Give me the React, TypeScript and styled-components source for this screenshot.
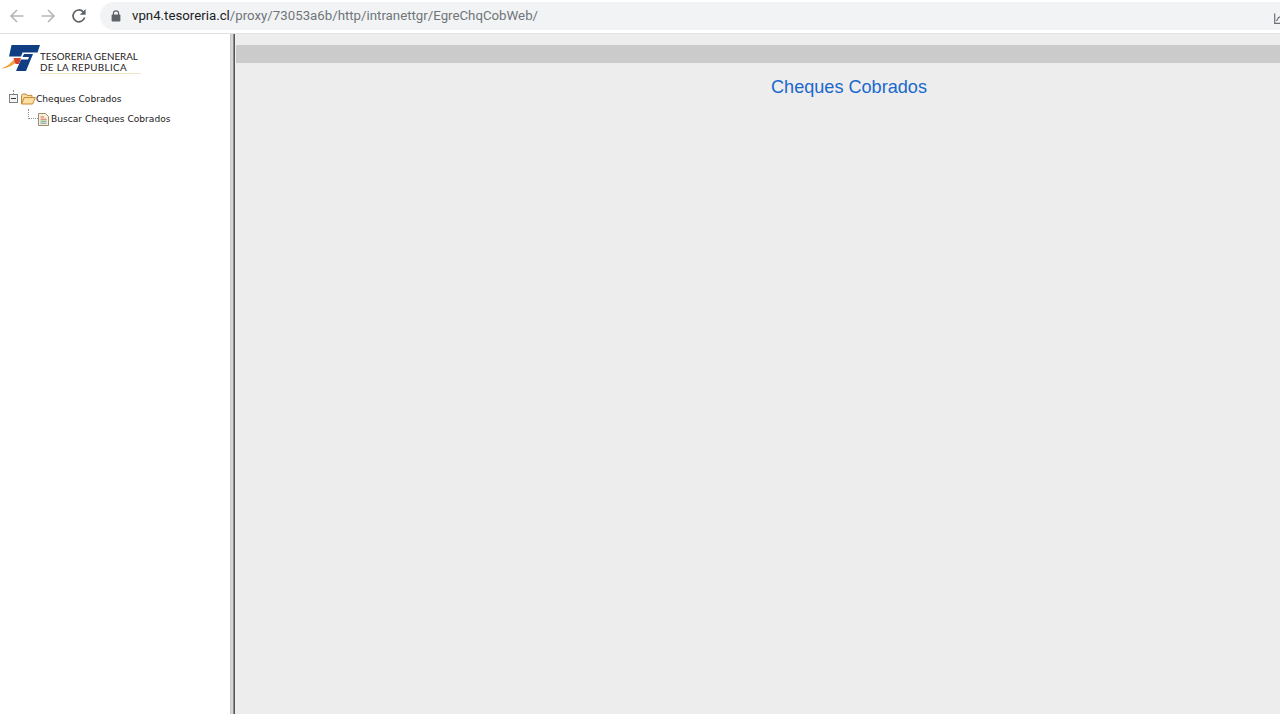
import styled, { createGlobalStyle } from 'styled-components'

const GlobalStyle = createGlobalStyle`
  html, body {
    margin: 0;
    padding: 0;
    height: 100%;
    overflow: hidden;
    background: #ffffff;
  }
  #root {
    height: 100%;
  }
`

const App = () => {
  return (
    <Page>
      <GlobalStyle />
      <Toolbar>
        <NavButton $dim>
          <svg width="16" height="16" viewBox="0 0 16 16">
            <path d="M14.5 8H2.5M8 2 2 8l6 6" fill="none" stroke="currentColor" strokeWidth="1.6" />
          </svg>
        </NavButton>
        <NavButton $dim>
          <svg width="16" height="16" viewBox="0 0 16 16">
            <path d="M1.5 8h12M8 2l6 6-6 6" fill="none" stroke="currentColor" strokeWidth="1.6" />
          </svg>
        </NavButton>
        <NavButton>
          <svg width="16" height="16" viewBox="0 0 16 16">
            <path d="M13.6 9.5A5.9 5.9 0 1 1 12.2 3.8" fill="none" stroke="currentColor" strokeWidth="1.7" />
            <path d="M14.6 1v5.8H8.8z" fill="currentColor" />
          </svg>
        </NavButton>
        <AddressBar>
          <svg width="10" height="12" viewBox="0 0 10 12">
            <path d="M2.4 5V3.4a2.6 2.6 0 0 1 5.2 0V5" fill="none" stroke="#5f6368" strokeWidth="1.2" />
            <rect x="0.6" y="4.6" width="8.8" height="7" rx="1" fill="#5f6368" />
          </svg>
          <Url>
            <UrlHost>vpn4.tesoreria.cl</UrlHost>/proxy/73053a6b/http/intranettgr/EgreChqCobWeb/
          </Url>
          <EdgeIcon>
            <svg width="6" height="11" viewBox="0 0 6 11">
              <path d="M0.7 0.5V10.3H6" fill="none" stroke="#6b6f73" strokeWidth="1.2" />
              <path d="M2.5 8 4.4 4.6 6 3.8" fill="none" stroke="#6b6f73" strokeWidth="1.2" />
            </svg>
          </EdgeIcon>
        </AddressBar>
      </Toolbar>
      <Frames>
        <Sidebar>
          <Logo>
            <svg width="42" height="28" viewBox="0 0 42 28">
              <path d="M0 24.5C5 23 9 20 13 15.5L18 15.5C14 20 8 24.5 0 24.5Z" fill="#f0a545" />
              <path d="M10.5 1H39L36.5 8.5H21.5L20 12.5H8Z" fill="#0f3f82" />
              <path d="M12.5 14H20L18 20H14.5Z" fill="#d9432c" />
              <path d="M23 10H32L25 27H15L20 15.5H27L28 13H21.5Z" fill="#0f3f82" />
            </svg>
            <LogoText>
              <LogoLine>TESORERIA GENERAL</LogoLine>
              <LogoLine $wide>DE LA REPUBLICA</LogoLine>
            </LogoText>
          </Logo>
          <TreeRow>
            <Expander />
            <svg width="15" height="12" viewBox="0 0 15 12">
              <path d="M0.5 11V2.2L1.5 1H5L6 2.4H11V4.5" fill="#f8dc9f" stroke="#bd8d45" />
              <path d="M0.5 11 3.2 4.6H14.4L11.6 11Z" fill="#fbe0a4" stroke="#c9872c" />
            </svg>
            <TreeLabel>Cheques Cobrados</TreeLabel>
          </TreeRow>
          <TreeChild>
            <Connector />
            <svg width="11" height="13" viewBox="0 0 11 13">
              <path d="M0.5 0.5H7.5L10.5 3.5V12.5H0.5Z" fill="#f8f0dc" stroke="#9b8b66" />
              <path d="M2.5 4H6M2.5 6.2H8.5" stroke="#cf6b5a" />
              <path d="M2.5 8.2H8.5" stroke="#62a56b" />
              <path d="M2.5 10.2H8.5" stroke="#6c8fc0" />
            </svg>
            <TreeLabel $gap>Buscar Cheques Cobrados</TreeLabel>
          </TreeChild>
        </Sidebar>
        <Divider />
        <Main>
          <Band />
          <Title>Cheques Cobrados</Title>
        </Main>
      </Frames>
    </Page>
  )
}

const Page = styled.div`
  display: flex;
  flex-direction: column;
  height: 714px;
  width: 1280px;
  overflow: hidden;
`

const Toolbar = styled.header`
  display: flex;
  align-items: flex-start;
  flex: none;
  height: 34px;
  box-sizing: border-box;
  padding: 2px 0 0 1px;
  background: #ffffff;
  border-bottom: 1px solid #e3e3e3;
`

const NavButton = styled.div<{ $dim?: boolean }>`
  display: flex;
  align-items: center;
  justify-content: center;
  width: 31px;
  height: 28px;
  color: ${({ $dim }) => ($dim ? '#b4b7ba' : '#5f6368')};
`

const AddressBar = styled.div`
  display: flex;
  align-items: center;
  flex: 1;
  height: 28px;
  margin-left: 6px;
  padding-left: 11px;
  background: #f1f3f4;
  border-radius: 14px 0 0 14px;
`

const Url = styled.div`
  flex: 1;
  margin: -1px 0 0 11px;
  font-family: Roboto, sans-serif;
  font-size: 13.25px;
  color: #70757a;
  white-space: nowrap;
`

const UrlHost = styled.span`
  color: #202124;
`

const EdgeIcon = styled.div`
  display: flex;
  width: 6px;
  margin-top: 4px;
`

const Frames = styled.div`
  display: flex;
  flex: 1;
  min-height: 0;
`

const Sidebar = styled.aside`
  flex: none;
  width: 230px;
  box-sizing: border-box;
  padding: 10px 0 0 1px;
  background: #ffffff;
`

const Logo = styled.div`
  display: flex;
  align-items: flex-start;
  height: 45px;
`

const LogoText = styled.div`
  margin: 7px 0 0 -3px;
  padding: 0 3px 1px 0;
  border-bottom: 1px solid #f0e6c4;
`

const LogoLine = styled.div<{ $wide?: boolean }>`
  font-family: Lato, sans-serif;
  font-size: 9.8px;
  line-height: 10.5px;
  letter-spacing: ${({ $wide }) => ($wide ? '0.35px' : '0')};
  color: #1f2126;
  white-space: nowrap;
`

const TreeRow = styled.div`
  display: flex;
  align-items: center;
  height: 20px;
  padding-left: 8px;
`

const TreeChild = styled(TreeRow)`
  padding-left: 26px;
`

const Expander = styled.span`
  position: relative;
  box-sizing: border-box;
  width: 9px;
  height: 9px;
  margin: -2px 3px 0 0;
  border: 1px solid #808080;
  background: #f4f4f4;

  &::before {
    content: '';
    position: absolute;
    left: 3px;
    top: -5px;
    height: 4px;
    border-left: 1px dotted #909090;
  }

  &::after {
    content: '';
    position: absolute;
    left: 1px;
    right: 1px;
    top: 3px;
    height: 1px;
    background: #333333;
  }
`

const Connector = styled.span`
  align-self: flex-start;
  box-sizing: border-box;
  width: 10px;
  height: 10px;
  margin: 0 0 0 1px;
  border-left: 1px dotted #909090;
  border-bottom: 1px dotted #909090;
`

const TreeLabel = styled.span<{ $gap?: boolean }>`
  margin-left: ${({ $gap }) => ($gap ? '2px' : '0')};
  font-family: 'DejaVu Sans', sans-serif;
  font-size: 9.1px;
  color: #222222;
  white-space: nowrap;
`

const Divider = styled.div`
  flex: none;
  width: 6px;
  box-sizing: border-box;
  background: #d6d6d6;
  border-left: 1px solid #c9c9c9;
  border-right: 1px solid #f0f0f0;
  box-shadow: inset -1px 0 0 #555555, inset -2px 0 0 #8a8a8a;
`

const Main = styled.main`
  flex: 1;
  padding-top: 11px;
  background: #ededed;
`

const Band = styled.div`
  height: 18px;
  background: #cbcbcb;
`

const Title = styled.h1`
  margin: 12px 0 0;
  padding-left: 182px;
  font-family: 'Liberation Sans', sans-serif;
  font-size: 18.1px;
  font-weight: 400;
  line-height: 24px;
  text-align: center;
  color: #1968cc;
`

export default App
